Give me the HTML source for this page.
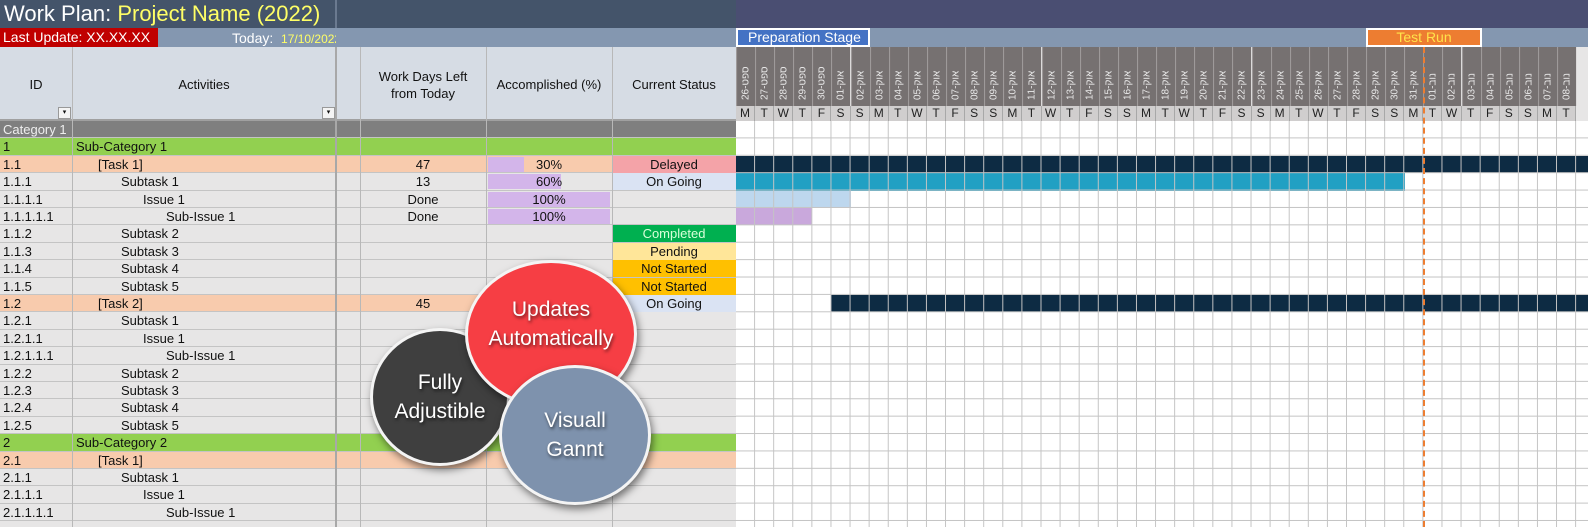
<!DOCTYPE html>
<html><head><meta charset="utf-8"><style>
*{margin:0;padding:0;box-sizing:border-box}
body{width:1588px;height:527px;overflow:hidden;position:relative;background:#e7e6e6;font-family:"Liberation Sans",Arial,sans-serif;font-size:13px;color:#111}
.a{position:absolute}
.row{position:absolute;left:0;width:736px;height:17.4px;border-bottom:1px solid #c4c4c4;line-height:17px;white-space:nowrap}
.row span{position:absolute;top:0}
.id{left:3px}
.wd{left:360px;width:126px;text-align:center}
.acc{left:486px;width:126px;text-align:center}
.bar{position:absolute;left:488px;top:1px;height:15px;background:#d3b5ea}
.st{left:612px;width:124px;text-align:center;height:17px}
.vl{position:absolute;top:47px;bottom:0;width:1px;background:#b8b8b8}
.dates{position:absolute;left:736px;top:47px;display:flex}
.dates div{width:19.1px;height:59px;background:#767171;border-right:1px solid #a09c9c;color:#e8e8e8;font-size:10px;writing-mode:vertical-rl;transform:rotate(180deg);display:flex;align-items:center;justify-content:flex-start;padding-top:6px;white-space:nowrap}
.days{position:absolute;left:736px;top:106px;display:flex}
.days div{width:19.1px;height:15px;background:#d0cece;border-right:1px solid #a8a8a8;text-align:center;font-size:12px;line-height:15px;color:#222}
.circ{position:absolute;border-radius:50%;border:3px solid #f4f4f4;box-shadow:2px 4px 8px rgba(0,0,0,.5);color:#fff;text-align:center;display:flex;align-items:center;justify-content:center;font-size:21px;line-height:29px;text-shadow:1px 2px 3px rgba(0,0,0,.6)}
</style></head><body>
<!-- title -->
<div class="a" style="left:0;top:0;width:736px;height:28px;background:#44546a"></div>
<div class="a" style="left:736px;top:0;width:852px;height:28px;background:#4a4e72"></div>
<div class="a" style="left:335px;top:0;width:2px;height:47px;background:#6b7a90"></div>
<div class="a" style="left:4px;top:1px;font-size:22px;color:#fff;line-height:26px">Work Plan: <span style="color:#ffff66">Project Name (2022)</span></div>
<div class="a" style="left:0;top:28px;width:1588px;height:19px;background:#8497b0"></div>
<div class="a" style="left:0;top:28px;width:158px;height:19px;background:#c00000;color:#fff;font-size:14px;line-height:19px;padding-left:3px">Last Update: XX.XX.XX</div>
<div class="a" style="left:232px;top:28px;width:104px;height:19px;overflow:hidden;color:#fff;font-size:14px;line-height:20px;white-space:nowrap">Today: &nbsp;<span style="color:#ffff66;font-size:12px">17/10/2022</span></div>
<div class="a" style="left:736px;top:28px;width:134px;height:19px;background:#4472c4;border:2px solid #fff;color:#fff;font-size:14px;line-height:15px;padding-left:10px">Preparation Stage</div>
<div class="a" style="left:1366px;top:28px;width:116px;height:19px;background:#ed7d31;border:2px solid #fff;color:#ffe34a;font-size:14px;line-height:15px;text-align:center">Test Run</div>
<!-- header -->
<div class="a" style="left:0;top:47px;width:736px;height:74px;background:#d6dce4;border-bottom:2px solid #a0a0a0"></div>
<div class="a" style="left:0;top:77px;width:72px;text-align:center">ID</div>
<div class="a" style="left:72px;top:77px;width:264px;text-align:center">Activities</div>
<div class="a" style="left:360px;top:68px;width:126px;text-align:center;line-height:17px">Work Days Left<br>from Today</div>
<div class="a" style="left:486px;top:77px;width:126px;text-align:center">Accomplished (%)</div>
<div class="a" style="left:612px;top:77px;width:124px;text-align:center">Current Status</div>
<div class="a" style="left:58px;top:107px;width:13px;height:12px;background:#f4f4f4;border:1px solid #999;font-size:7px;text-align:center;line-height:10px">▾</div>
<div class="a" style="left:322px;top:107px;width:13px;height:12px;background:#f4f4f4;border:1px solid #999;font-size:7px;text-align:center;line-height:10px">▾</div>
<!-- rows -->
<div class="row" style="top:121px;background:#7f7f7f;color:#eee"><span class="id">Category 1</span></div>
<div class="row" style="top:138.4px;background:#92d050"><span class="id">1</span><span style="left:76px">Sub-Category 1</span></div>
<div class="row" style="top:155.8px;background:#f8cbad"><span class="id">1.1</span><span style="left:98px">[Task 1]</span><span class="wd">47</span><div class="bar" style="width:36px"></div><span class="acc">30%</span><span class="st" style="background:#f4a3a8">Delayed</span></div>
<div class="row" style="top:173.2px"><span class="id">1.1.1</span><span style="left:121px">Subtask 1</span><span class="wd">13</span><div class="bar" style="width:73px"></div><span class="acc">60%</span><span class="st" style="background:#dae3f3">On Going</span></div>
<div class="row" style="top:190.6px"><span class="id">1.1.1.1</span><span style="left:143px">Issue 1</span><span class="wd">Done</span><div class="bar" style="width:122px"></div><span class="acc">100%</span></div>
<div class="row" style="top:208px"><span class="id">1.1.1.1.1</span><span style="left:166px">Sub-Issue 1</span><span class="wd">Done</span><div class="bar" style="width:122px"></div><span class="acc">100%</span></div>
<div class="row" style="top:225.4px"><span class="id">1.1.2</span><span style="left:121px">Subtask 2</span><span class="st" style="background:#00b050;color:#d8ffd8">Completed</span></div>
<div class="row" style="top:242.8px"><span class="id">1.1.3</span><span style="left:121px">Subtask 3</span><span class="st" style="background:#ffe699">Pending</span></div>
<div class="row" style="top:260.2px"><span class="id">1.1.4</span><span style="left:121px">Subtask 4</span><span class="st" style="background:#ffc000">Not Started</span></div>
<div class="row" style="top:277.6px"><span class="id">1.1.5</span><span style="left:121px">Subtask 5</span><span class="st" style="background:#ffc000">Not Started</span></div>
<div class="row" style="top:295px;background:#f8cbad"><span class="id">1.2</span><span style="left:98px">[Task 2]</span><span class="wd">45</span><span class="st" style="background:#dae3f3">On Going</span></div>
<div class="row" style="top:312.4px"><span class="id">1.2.1</span><span style="left:121px">Subtask 1</span></div>
<div class="row" style="top:329.8px"><span class="id">1.2.1.1</span><span style="left:143px">Issue 1</span></div>
<div class="row" style="top:347.2px"><span class="id">1.2.1.1.1</span><span style="left:166px">Sub-Issue 1</span></div>
<div class="row" style="top:364.6px"><span class="id">1.2.2</span><span style="left:121px">Subtask 2</span></div>
<div class="row" style="top:382px"><span class="id">1.2.3</span><span style="left:121px">Subtask 3</span></div>
<div class="row" style="top:399.4px"><span class="id">1.2.4</span><span style="left:121px">Subtask 4</span></div>
<div class="row" style="top:416.8px"><span class="id">1.2.5</span><span style="left:121px">Subtask 5</span></div>
<div class="row" style="top:434.2px;background:#92d050"><span class="id">2</span><span style="left:76px">Sub-Category 2</span></div>
<div class="row" style="top:451.6px;background:#f8cbad"><span class="id">2.1</span><span style="left:98px">[Task 1]</span></div>
<div class="row" style="top:469px"><span class="id">2.1.1</span><span style="left:121px">Subtask 1</span></div>
<div class="row" style="top:486.4px"><span class="id">2.1.1.1</span><span style="left:143px">Issue 1</span></div>
<div class="row" style="top:503.8px"><span class="id">2.1.1.1.1</span><span style="left:166px">Sub-Issue 1</span></div>
<div class="vl" style="left:72px"></div><div class="vl" style="left:335px;width:2px;background:#a8a8a8"></div><div class="vl" style="left:360px"></div><div class="vl" style="left:486px"></div><div class="vl" style="left:612px"></div>
<!-- gantt -->
<div class="a" style="left:736px;top:121px;width:852px;height:406px;background:#fff"></div>
<div class="a" style="left:736px;top:155.8px;width:852px;height:17.4px;background:#0d2b43"></div>
<div class="a" style="left:736px;top:173.2px;width:669px;height:17.4px;background:#21a0c3"></div>
<div class="a" style="left:736px;top:190.6px;width:115px;height:17.4px;background:#bdd7ee"></div>
<div class="a" style="left:736px;top:208px;width:76px;height:17.4px;background:#c9a8dc"></div>
<div class="a" style="left:831px;top:295px;width:757px;height:17.4px;background:#0d2b43"></div>
<div class="a" style="left:736px;top:121px;width:852px;height:406px;background-image:linear-gradient(to right,#c4c4c4 1px,transparent 1px),linear-gradient(to bottom,transparent 16.4px,#c4c4c4 16.4px);background-size:19.1px 100%,100% 17.4px;background-position:18.1px 0,0 0"></div>
<div class="dates"><div>ספט-26</div><div>ספט-27</div><div>ספט-28</div><div>ספט-29</div><div>ספט-30</div><div>אוק-01</div><div>אוק-02</div><div>אוק-03</div><div>אוק-04</div><div>אוק-05</div><div>אוק-06</div><div>אוק-07</div><div>אוק-08</div><div>אוק-09</div><div>אוק-10</div><div>אוק-11</div><div>אוק-12</div><div>אוק-13</div><div>אוק-14</div><div>אוק-15</div><div>אוק-16</div><div>אוק-17</div><div>אוק-18</div><div>אוק-19</div><div>אוק-20</div><div>אוק-21</div><div>אוק-22</div><div>אוק-23</div><div>אוק-24</div><div>אוק-25</div><div>אוק-26</div><div>אוק-27</div><div>אוק-28</div><div>אוק-29</div><div>אוק-30</div><div>אוק-31</div><div>נוב-01</div><div>נוב-02</div><div>נוב-03</div><div>נוב-04</div><div>נוב-05</div><div>נוב-06</div><div>נוב-07</div><div>נוב-08</div></div>
<div class="days"><div>M</div><div>T</div><div>W</div><div>T</div><div>F</div><div>S</div><div>S</div><div>M</div><div>T</div><div>W</div><div>T</div><div>F</div><div>S</div><div>S</div><div>M</div><div>T</div><div>W</div><div>T</div><div>F</div><div>S</div><div>S</div><div>M</div><div>T</div><div>W</div><div>T</div><div>F</div><div>S</div><div>S</div><div>M</div><div>T</div><div>W</div><div>T</div><div>F</div><div>S</div><div>S</div><div>M</div><div>T</div><div>W</div><div>T</div><div>F</div><div>S</div><div>S</div><div>M</div><div>T</div></div>
<div class="a" style="left:1423px;top:47px;height:480px;border-left:2px dashed #ed7d31"></div>
<!-- circles -->
<div class="circ" style="left:370px;top:328px;width:140px;height:138px;background:#3f3f3f">Fully<br>Adjustible</div>
<div class="circ" style="left:465px;top:260px;width:172px;height:148px;background:#f63e44;padding-bottom:20px">Updates<br>Automatically</div>
<div class="circ" style="left:499px;top:365px;width:152px;height:140px;background:#7e92ad">Visuall<br>Gannt</div>
</body></html>
